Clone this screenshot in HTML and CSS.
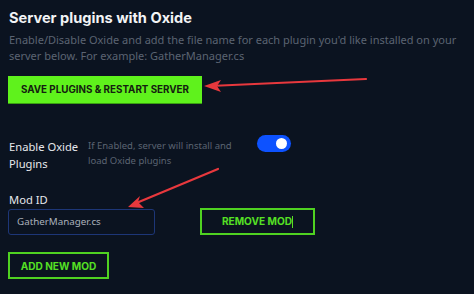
FILE: index.html
```html
<!DOCTYPE html>
<html>
<head>
<meta charset="utf-8">
<link rel="stylesheet" href="styles.css">
</head>
<body>
<div class="panel">
  <h1 class="title">Server plugins with Oxide</h1>
  <p class="desc">Enable/Disable Oxide and add the file name for each plugin you'd like installed on your server below. For example: GatherManager.cs</p>
  <button class="btn-save">SAVE PLUGINS &amp; RESTART SERVER</button>
  <div class="setting">
    <div class="setting-label">Enable Oxide Plugins</div>
    <div class="setting-help">If Enabled, server will install and load Oxide plugins</div>
    <div class="toggle"><span class="knob"></span></div>
  </div>
  <div class="field-label">Mod ID</div>
  <div class="mod-row">
    <div class="input">GatherManager.cs</div>
    <button class="btn-outline btn-remove">REMOVE MOD<span class="caret"></span></button>
  </div>
  <button class="btn-outline btn-add">ADD NEW MOD</button>
  <svg class="arrows" width="474" height="294" viewBox="0 0 474 294">
    <g stroke="#e8383d" stroke-width="2.2" stroke-linecap="round" fill="none">
      <line x1="366" y1="79" x2="210" y2="86"/>
      <line x1="218" y1="169" x2="134" y2="204"/>
    </g>
    <g fill="#e8383d">
      <polygon points="204,86 221,80 217,86 221,92"/>
      <polygon points="128,207 140,196 138,202 144,208"/>
    </g>
  </svg>
</div>
</body>
</html>
```
FILE: styles.css
```css
html, body {
  margin: 0;
  padding: 0;
  background: #0b1320;
}
.panel {
  position: relative;
  width: 474px;
  height: 294px;
  box-sizing: border-box;
  padding: 9px 8px 0 8px;
  font-family: "Noto Sans", "Open Sans", sans-serif;
  color: #e4e7eb;
  overflow: hidden;
}
.title {
  margin: 0 0 0 1px;
  font-family: "Inter", sans-serif;
  font-weight: 700;
  font-size: 14.6px;
  line-height: 18px;
  color: #f2f3f5;
}
.desc {
  margin: 5px 0 0 1px;
  font-size: 11px;
  line-height: 16px;
  color: #5b6472;
  width: 455px;
}
.btn-save {
  display: block;
  margin-top: 12px;
  width: 194px;
  height: 27px;
  border: none;
  background: #5ff21c;
  color: #142010;
  font-family: "Inter", sans-serif;
  font-weight: 700;
  font-size: 9.8px;
  padding: 0;
  box-shadow: 0 1px 0 #3aa010;
}
.setting {
  display: flex;
  align-items: flex-start;
  margin-top: 35px;
}
.setting-label {
  width: 79px;
  margin-left: 1px;
  font-size: 11.2px;
  line-height: 17px;
  color: #e6e8ec;
}
.setting-help {
  width: 150px;
  font-size: 9.5px;
  line-height: 14.5px;
  color: #5b6472;
  margin-top: 1px;
}
.toggle {
  position: relative;
  width: 34px;
  height: 17px;
  border-radius: 9px;
  background: #0d52ff;
  margin-left: 19px;
  margin-top: -3px;
}
.knob {
  position: absolute;
  right: 4px;
  top: 3px;
  width: 11px;
  height: 11px;
  border-radius: 50%;
  background: #ffffff;
}
.field-label {
  margin: 19px 0 0 1px;
  font-size: 11.2px;
  line-height: 17px;
  color: #e6e8ec;
}
.mod-row {
  display: flex;
  align-items: flex-end;
  gap: 45px;
}
.input {
  box-sizing: border-box;
  width: 147px;
  height: 26px;
  border: 1px solid #1d3677;
  border-radius: 3px;
  padding: 0 0 0 8px;
  font-size: 9.8px;
  line-height: 24px;
  color: #aab1bb;
}
.btn-outline {
  display: block;
  box-sizing: border-box;
  height: 27px;
  padding: 0;
  border: 2px solid #4fd121;
  background: transparent;
  color: #55e024;
  font-family: "Inter", sans-serif;
  font-weight: 700;
  font-size: 10.1px;
}
.btn-remove {
  width: 115px;
}
.caret {
  display: inline-block;
  width: 1px;
  height: 12px;
  background: #55e024;
  vertical-align: middle;
}
.btn-add {
  width: 101px;
  margin-top: 17px;
}
.arrows {
  position: absolute;
  left: 0;
  top: 0;
  pointer-events: none;
}
```
